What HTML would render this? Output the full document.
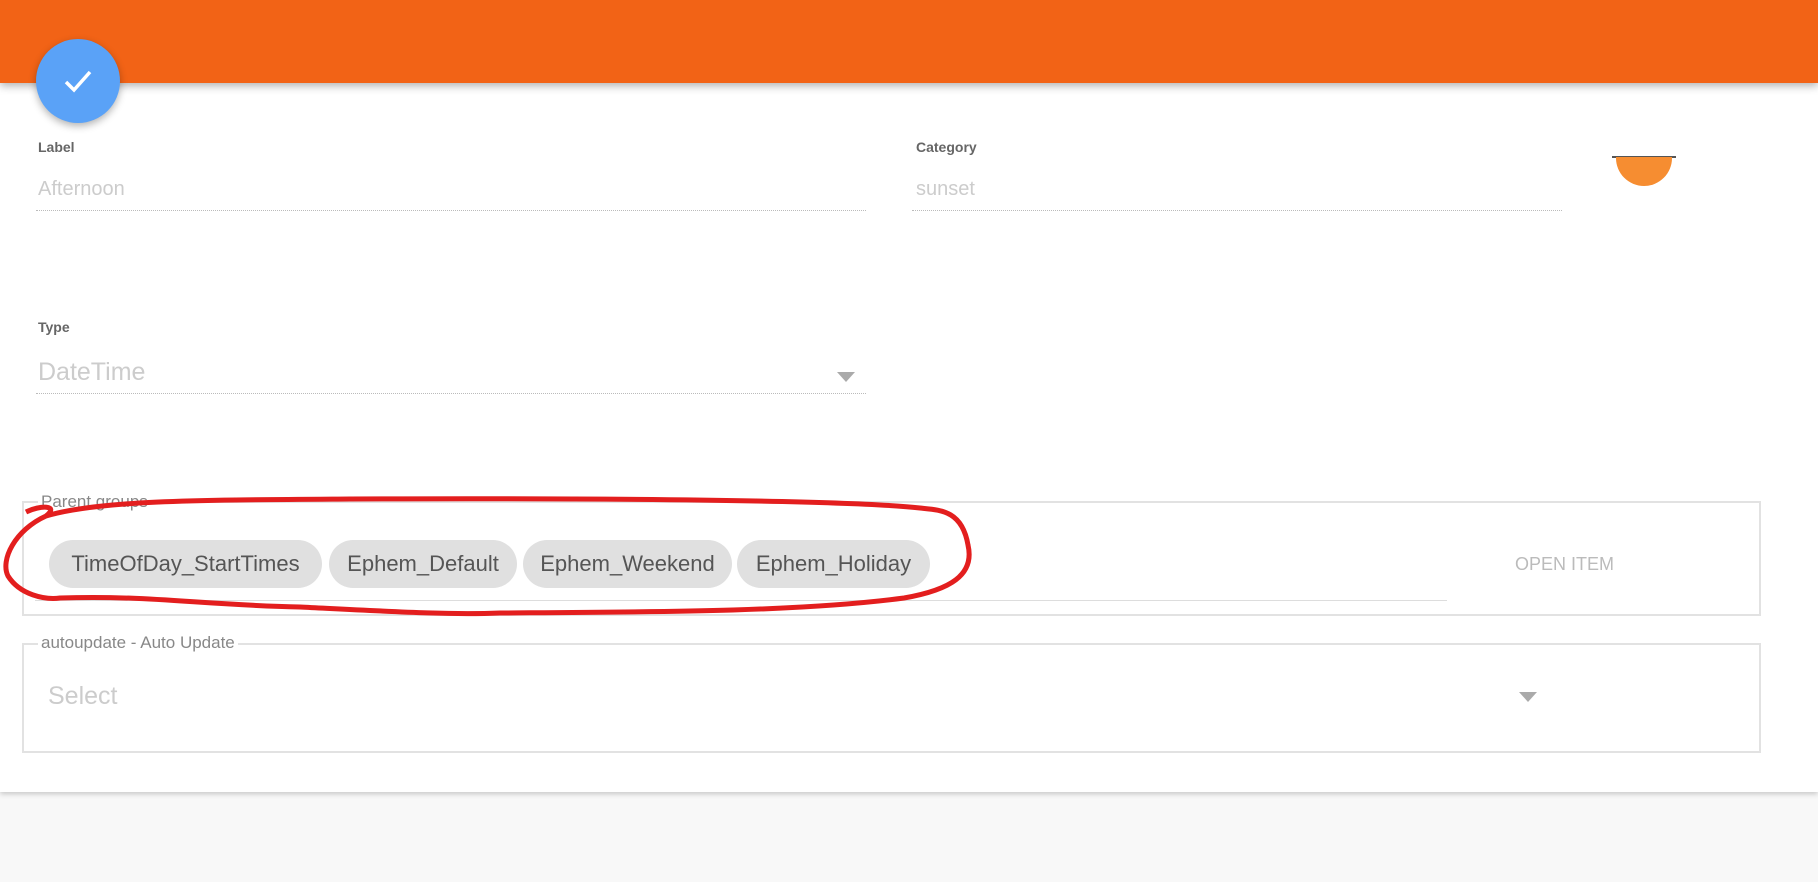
<!DOCTYPE html>
<html><head><meta charset="utf-8"><style>
*{box-sizing:border-box;margin:0;padding:0}
body{width:1818px;height:882px;background:#f8f8f8;font-family:"Liberation Sans",sans-serif;position:relative;overflow:hidden}
.bar{position:absolute;left:0;top:0;width:1818px;height:83px;background:#f26316;box-shadow:0 3px 8px rgba(0,0,0,.3);z-index:2}
.card{position:absolute;left:0;top:83px;width:1818px;height:709px;background:#fff;box-shadow:0 2px 5px rgba(0,0,0,.2)}
.fab{position:absolute;left:36px;top:39px;width:84px;height:84px;border-radius:50%;background:#5aa2f7;box-shadow:0 3px 8px rgba(0,0,0,.3);z-index:3}
.abs{position:absolute}
.lbl{font-size:14px;font-weight:bold;color:#666}
.val{color:#ccc}
.dot{border-bottom:1px dotted #bbb;height:1px}
.box{position:absolute;border:2px solid #e2e2e2}
.chip{position:absolute;top:540px;height:48px;border-radius:24px;background:#e0e0e0;color:#555;font-size:22px;line-height:48px;text-align:center}
.tri{width:0;height:0;border-left:9px solid transparent;border-right:9px solid transparent;border-top:10px solid #aaa}
</style></head><body>
<div class="bar"></div>
<div class="card"></div>
<div class="fab"><svg width="84" height="84" viewBox="0 0 84 84"><path d="M30 43 L38 51 L54 33" stroke="#fff" stroke-width="3.5" fill="none"/></svg></div>

<div class="abs lbl" style="left:38px;top:139px">Label</div>
<div class="abs val" style="left:38px;top:178px;font-size:20px">Afternoon</div>
<div class="abs dot" style="left:36px;top:210px;width:830px"></div>

<div class="abs lbl" style="left:916px;top:139px">Category</div>
<div class="abs val" style="left:916px;top:178px;font-size:20px">sunset</div>
<div class="abs dot" style="left:912px;top:210px;width:650px"></div>

<div class="abs" style="left:1612px;top:156px;width:64px;height:2px;background:#555"></div>
<div class="abs" style="left:1616px;top:157px;width:56px;height:29px;background:#f68d31;border-radius:0 0 28px 28px"></div>

<div class="abs lbl" style="left:38px;top:319px">Type</div>
<div class="abs val" style="left:38px;top:358px;font-size:25px">DateTime</div>
<div class="abs tri" style="left:837px;top:372px"></div>
<div class="abs dot" style="left:36px;top:393px;width:830px"></div>

<div class="box" style="left:22px;top:501px;width:1739px;height:115px"></div>
<div class="abs" style="left:38px;top:492px;background:#fff;color:#888;font-size:17px;padding:0 3px">Parent groups</div>
<div class="chip" style="left:49px;width:273px">TimeOfDay_StartTimes</div>
<div class="chip" style="left:329px;width:188px">Ephem_Default</div>
<div class="chip" style="left:523px;width:209px">Ephem_Weekend</div>
<div class="chip" style="left:737px;width:193px">Ephem_Holiday</div>
<div class="abs" style="left:35px;top:600px;width:1412px;height:1px;background:#ddd"></div>
<div class="abs" style="left:1515px;top:554px;color:#bbb;font-size:18px">OPEN ITEM</div>

<div class="box" style="left:22px;top:643px;width:1739px;height:110px"></div>
<div class="abs" style="left:38px;top:633px;background:#fff;color:#888;font-size:17px;padding:0 3px">autoupdate - Auto Update</div>
<div class="abs val" style="left:48px;top:682px;font-size:25px">Select</div>
<div class="abs tri" style="left:1519px;top:692px"></div>

<svg class="abs" style="left:0;top:0" width="1818" height="882"><path d="M26 512 C40 505 60 505 46 516 C15 530 0 560 8 576 C20 595 45 600 60 598 C150 595 200 605 300 607 C400 612 450 615 500 613 C650 612 800 612 904 598 C950 590 975 575 968 545 C962 510 940 510 920 508 C850 500 600 498 350 499 C200 500 100 500 46 516" stroke="#e31e1e" stroke-width="5" fill="none"/></svg>
</body></html>
